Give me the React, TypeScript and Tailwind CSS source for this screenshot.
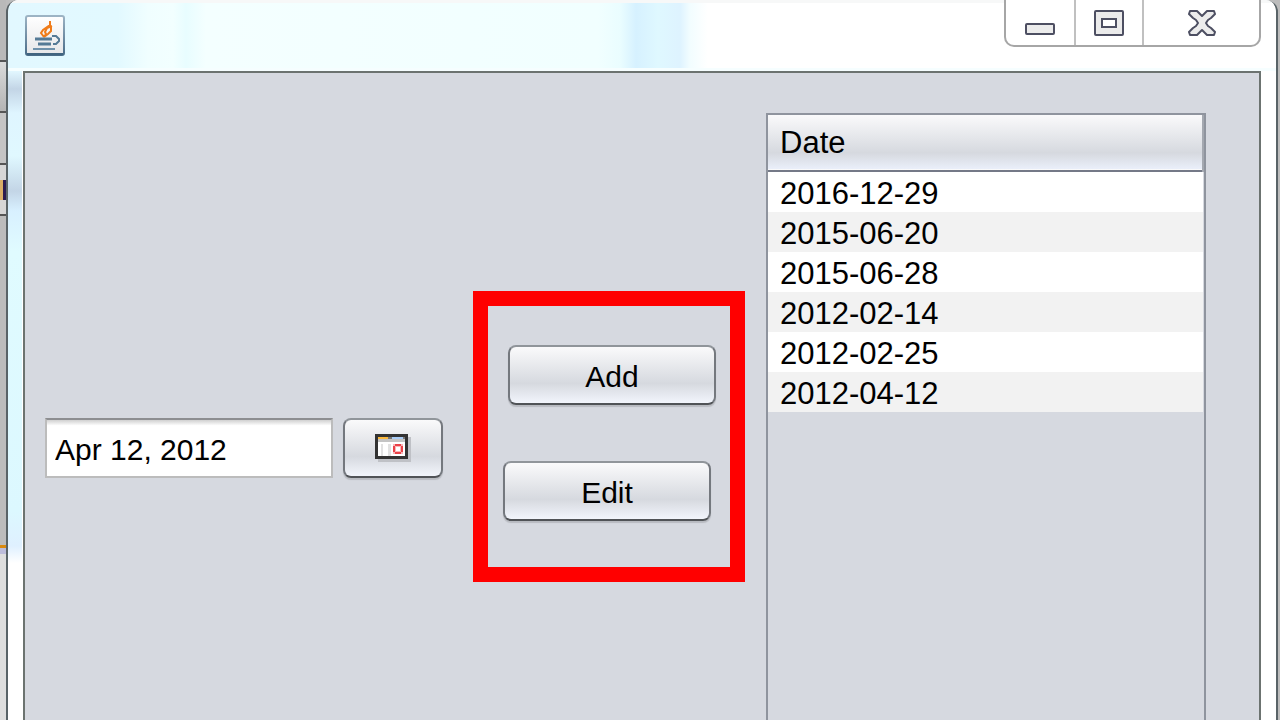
import { useState } from "react";

const dates = [
  "2016-12-29",
  "2015-06-20",
  "2015-06-28",
  "2012-02-14",
  "2012-02-25",
  "2012-04-12",
];

const buttonStyle =
  "flex h-[60px] items-center justify-center rounded-lg border-2 border-t-[#90959a] border-x-[#74787e] border-b-[#505357] bg-linear-to-b from-[#fafafb] via-[#d6d9df] via-65% to-[#f2f5fc] shadow-[0_2px_1px_rgba(0,0,0,0.14)] text-[30px] leading-none text-black";

function JavaIcon() {
  return (
    <svg width="40" height="41" viewBox="0 0 40 41" role="img" aria-label="Java">
      <defs>
        <linearGradient id="tile" x1="0" y1="0" x2="0" y2="1">
          <stop offset="0" stopColor="#ffffff" />
          <stop offset="1" stopColor="#e6e6e8" />
        </linearGradient>
        <linearGradient id="edge" x1="0" y1="0" x2="0" y2="1">
          <stop offset="0" stopColor="#9db4c4" />
          <stop offset="1" stopColor="#4a6c88" />
        </linearGradient>
      </defs>
      <rect x="1" y="1" width="38" height="39" rx="2" fill="url(#tile)" stroke="url(#edge)" strokeWidth="2" />
      <path d="M2 39h36" stroke="#41647f" strokeWidth="2" />
      <path
        d="M25 6v4l-7 5-2 3 3 4M27 11l-5 2-2 4 1 2-2 3M26 12v4l-3 3-4 3"
        fill="none"
        stroke="#f07c1a"
        strokeWidth="2"
      />
      <path d="M10 24h17M13 29h13" stroke="#557a96" strokeWidth="3" />
      <path d="M27 21h4l3 3v2l-3 3h-3" fill="none" stroke="#557a96" strokeWidth="2" />
      <path d="M8 34h22" stroke="#6f91ab" strokeWidth="2" />
    </svg>
  );
}

function CalendarIcon() {
  return (
    <svg width="36" height="28" viewBox="0 0 36 28" aria-hidden="true">
      <path d="M3 3h33v25H3z" fill="#bfc1c6" />
      <path d="M0 0h33v25H0z" fill="#333" />
      <path d="M3 3h27v19H3z" fill="#fff" />
      <path d="M3 3h10v2H3z" fill="#fcb93c" />
      <path d="M13 3h4v3h-4zM28 3h2v3h-2z" fill="#777" />
      <path d="M17 3h11v2H17z" fill="#a9cdf8" />
      <path d="M3 5h27v3H3z" fill="#c4c4c4" />
      <path d="M6 10h2v12H6zM13 10h3v12h-3z" fill="#e2e2e2" />
      <path d="M18 10h10v10H18z" fill="#f9b5b7" />
      <path d="M20 10h6v2h-6zM20 18h6v2h-6zM18 12h2v6h-2zM26 12h2v6h-2z" fill="#ea4248" />
      <path d="M21 13h4v4h-4z" fill="#fff" />
    </svg>
  );
}

function TitleBar() {
  return (
    <header className="flex h-[71px] items-start justify-between border-y-3 border-t-[#f7f8f8] border-b-[#f6feff] bg-[linear-gradient(90deg,#e2f8ff_0,#e2f9ff_110px,#f0feff_140px,#f2ffff_165px,#e8fdff_178px,#f4ffff_198px,#f1ffff_590px,#eafdff_612px,#d6f1ff_628px,#dff8ff_650px,#def3ff_672px,#f2fdff_682px,#ffffff_700px)]">
      <div className="pt-3 pl-[17px]">
        <JavaIcon />
      </div>
      <div className="-mt-[3px] mr-[15px] flex h-[47px] divide-x-2 divide-[#c0c0c0] overflow-hidden rounded-b-[10px] border-2 border-t-0 border-[#a6a6a6] bg-white">
        <button aria-label="Minimize" className="flex w-[70px] items-center justify-center pt-3">
          <svg width="30" height="12" viewBox="0 0 30 12" aria-hidden="true">
            <rect x="1" y="1" width="28" height="10" rx="1" fill="#ececec" stroke="#4d4f62" strokeWidth="2" />
          </svg>
        </button>
        <button aria-label="Maximize" className="flex w-[68px] items-center justify-center">
          <svg width="30" height="26" viewBox="0 0 30 26" aria-hidden="true">
            <rect x="1" y="1" width="28" height="24" rx="1" fill="#ebebeb" stroke="#4d4f62" strokeWidth="2" />
            <rect x="8" y="9" width="14" height="8" fill="#fff" stroke="#4d4f62" strokeWidth="2" />
          </svg>
        </button>
        <button aria-label="Close" className="flex w-[115px] items-center justify-center">
          <svg width="28" height="26" viewBox="0 0 28 26" aria-hidden="true">
            <path
              d="M2 1h7l3 3 2 2 2-2 3-3h7l1 3-4 4-3 2-2 3 2 3 3 2 4 4-1 3h-7l-3-3-2-2-2 2-3 3H2l-1-3 4-4 3-2 2-3-2-3-3-2-4-4z"
              fill="#ececec"
              stroke="#4d4f62"
              strokeWidth="2"
              strokeLinejoin="round"
            />
          </svg>
        </button>
      </div>
    </header>
  );
}

function DatePicker() {
  const [value, setValue] = useState("Apr 12, 2012");

  return (
    <div className="mt-[345px] flex shrink-0 gap-[10px]">
      <input
        type="text"
        aria-label="Date"
        value={value}
        onChange={(e) => setValue(e.target.value)}
        className="h-[60px] w-[288px] border-2 border-[#bcbcbc] border-t-[#8d8e91] bg-white bg-linear-to-b from-[#d0d0d0] to-white to-10% px-2 pt-1 text-[30px] text-black outline-none"
      />
      <button aria-label="Pick a date" className={`${buttonStyle} w-[100px]`}>
        <CalendarIcon />
      </button>
    </div>
  );
}

function DateTable() {
  return (
    <div className="mt-10 mr-[53px] ml-[21px] min-w-0 flex-1 border-2 border-b-0 border-[#8f949e]">
      <table className="w-full border-collapse text-left text-[31px] leading-10 text-black">
        <thead>
          <tr className="h-14 border-b-2 border-[#747987] bg-linear-to-b from-[#fafafb] via-[#d6d9df] via-70% to-[#eaeffa]">
            <th className="border-r-2 border-r-[#a4a8b0] px-3 font-normal">Date</th>
          </tr>
        </thead>
        <tbody>
          {dates.map((date) => (
            <tr key={date} className="h-10 bg-white even:bg-[#f2f2f2]">
              <td className="px-3 pt-1 leading-9">{date}</td>
            </tr>
          ))}
        </tbody>
      </table>
    </div>
  );
}

// Slice of the window that lies behind this one
function WindowBehind() {
  return (
    <div className="flex w-[6px] shrink-0 flex-col bg-[#dedede]">
      <div className="h-[62px] border-b-2 border-[#555] bg-[#b9b9b9]" />
      <div className="h-[51px] border-b-2 border-[#555] bg-linear-to-b from-[#dadada] to-[#b4b4b4]" />
      <div className="h-[52px] border-b-2 border-[#555] bg-[#c4c4c4]" />
      <div className="flex h-[51px] flex-col justify-center border-b-2 border-[#555] bg-[#d6d6d6]">
        <div className="h-5 border-r-3 border-[#2c1c50] bg-[#d9ad66]" />
      </div>
      <div className="h-[332px] border-b-3 border-[#d98a10] bg-[#bcbcbc]" />
      <div className="h-[6px] bg-[#bdbddb]" />
    </div>
  );
}

export default function App() {
  return (
    <div className="flex min-h-screen bg-[#bcbcbc] font-['Liberation_Sans',Arial,sans-serif]">
      <WindowBehind />
      <div className="mr-[2px] flex min-w-0 flex-1 flex-col overflow-hidden rounded-t-xl border-x-2 border-[#596367] bg-white">
        <TitleBar />
        <div className="flex flex-1 bg-[linear-gradient(180deg,#e2f7ff_0,#c3d5e6_18px,#dff5ff_42px,#e0f8ff_85px,#c3d5e6_120px,#d8f0ff_140px,#e0fbff_180px,#dcf8ff_440px,#dff0ff_475px,#ffffff_492px)] bg-[length:14px_100%] bg-no-repeat px-[15px]">
          <main className="flex flex-1 items-stretch border-2 border-b-0 border-[#6c7370] bg-[#d6d9e0] pl-5">
            <DatePicker />
            <section
              aria-label="Date actions"
              className="mt-[218px] ml-[30px] flex h-[291px] w-[272px] shrink-0 flex-col gap-14 border-15 border-[#ff0000] pt-[39px] pr-[14px] pl-[15px]"
            >
              <button className={`${buttonStyle} w-[208px] self-end pt-[3px]`}>Add</button>
              <button className={`${buttonStyle} w-[208px] self-start pt-[3px]`}>Edit</button>
            </section>
            <DateTable />
          </main>
        </div>
      </div>
    </div>
  );
}
